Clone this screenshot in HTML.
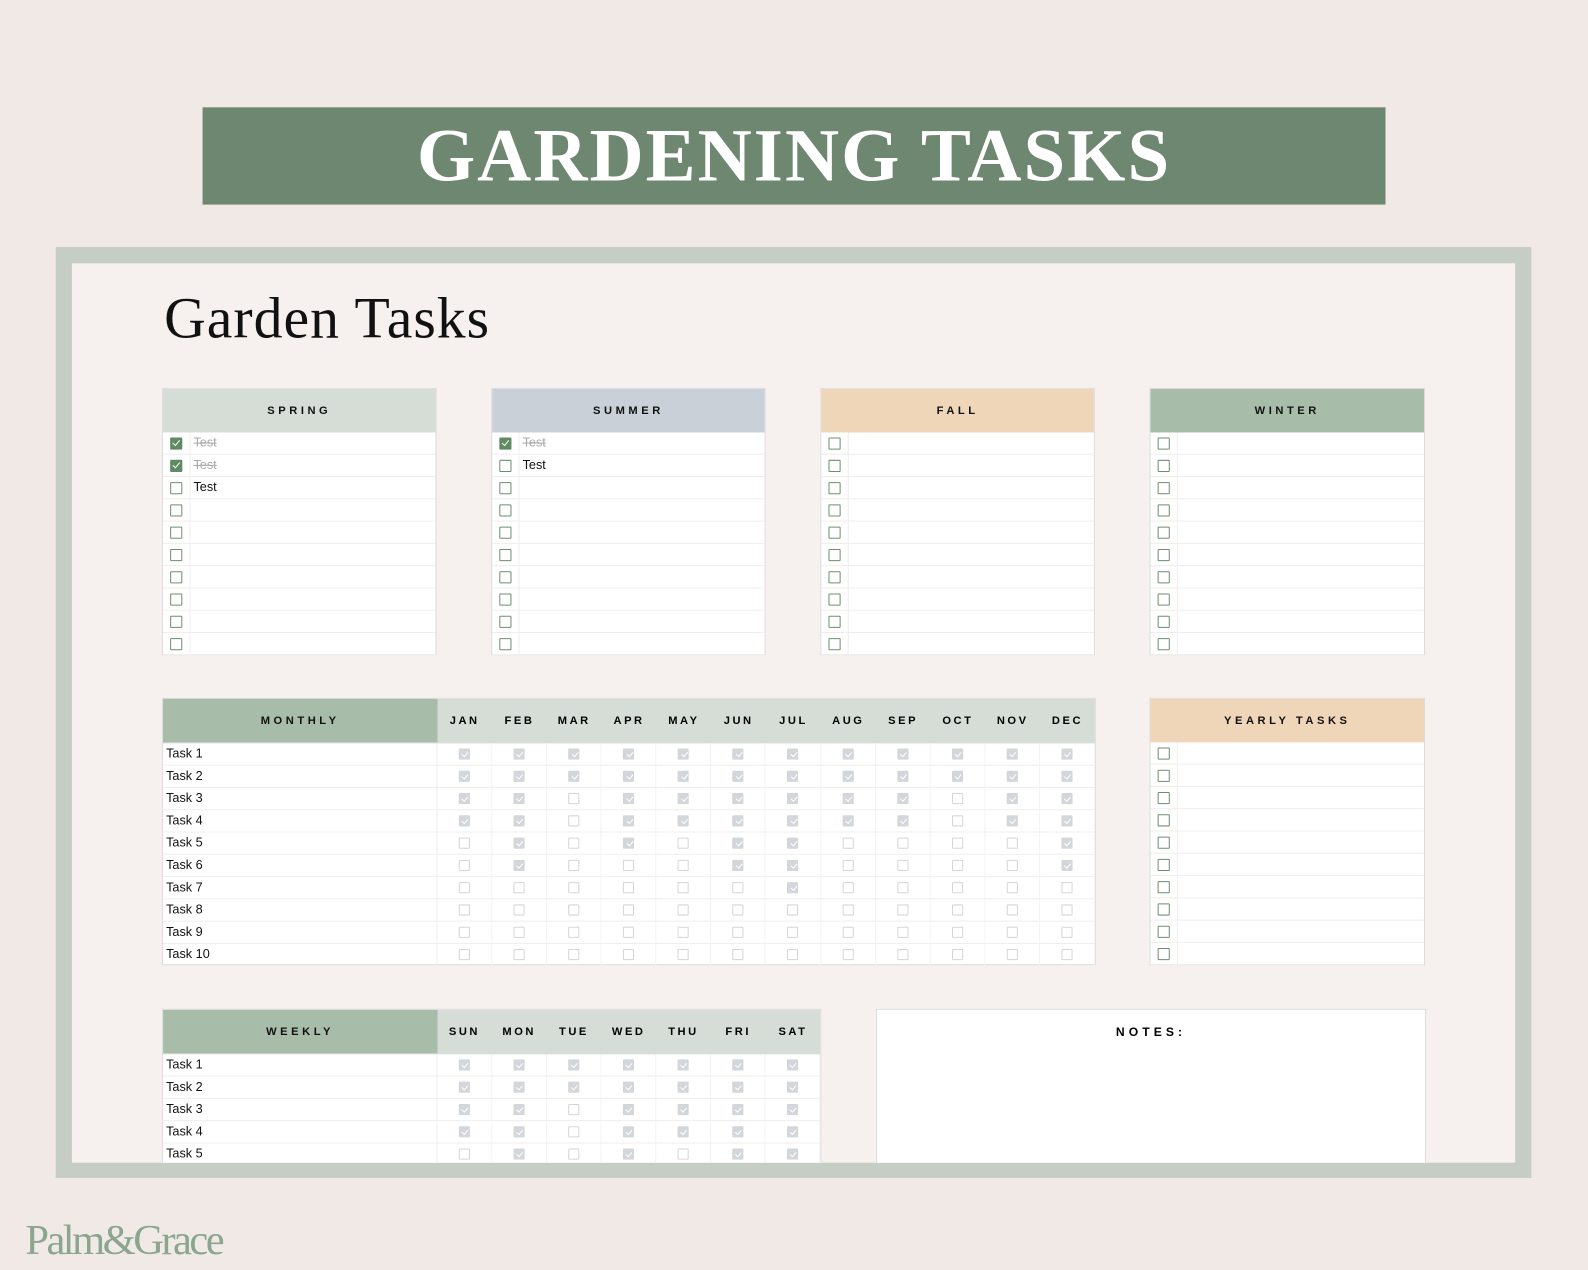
<!DOCTYPE html>
<html><head><meta charset="utf-8">
<style>
html,body{margin:0;padding:0;width:1588px;height:1270px;overflow:hidden;background:#f1e9e6;}
#w{position:absolute;left:0;top:0;width:1568px;height:1254px;transform:scale(1.0128);transform-origin:0 0;font-family:"Liberation Sans",sans-serif;}
.abs{position:absolute;}
#banner{left:200px;top:106px;width:1168px;height:96px;background:#6e8770;color:#fff;font-family:"Liberation Serif",serif;font-size:74px;font-weight:bold;text-align:center;line-height:96px;letter-spacing:2px;}
#frame{left:55px;top:244px;width:1457px;height:919px;background:#c6cdc4;}
#inner{left:71px;top:260px;width:1425px;height:888px;background:#f6f1ee;overflow:hidden;}
#gt{left:162px;top:282px;font-family:"Liberation Serif",serif;font-size:57px;letter-spacing:1px;color:#111;}
.box{position:absolute;background:#fff;border:1px solid #dcdcdc;box-sizing:border-box;}
.hd{height:43px;line-height:44px;text-align:center;font-size:11px;font-weight:bold;letter-spacing:3.5px;color:#111;}
.row{height:22px;border-bottom:1px solid #f0eeec;box-sizing:border-box;display:flex;position:relative;}
.cc{width:27px;border-right:1px solid #eeeeee;box-sizing:border-box;display:flex;align-items:center;justify-content:center;}
.tx{padding-left:3px;font-size:12.5px;line-height:21px;color:#111;}
.tx.s{color:#aaa;text-decoration:line-through;}
.cb{width:10px;height:10px;border:1.5px solid #6d8f70;border-radius:1px;position:relative;}
.cb.g{background:#5f8a63;border-color:#5f8a63;}
.cb.g::after,.gb.c::after{content:"";position:absolute;left:3px;top:0px;width:3px;height:6px;border:solid #fff;border-width:0 1.6px 1.6px 0;transform:rotate(40deg);}
.gb{width:11px;height:11px;border:1px solid #d3d6d9;border-radius:1px;position:relative;box-sizing:border-box;margin:auto;}
.gb.c{background:#d3d6da;}
.gb.c::after{left:3.5px;top:1px;width:2.5px;height:5px;border-width:0 1.4px 1.4px 0;}
.grid{display:flex;}
.lab{width:271px;border-right:1px solid #eee;box-sizing:border-box;font-size:12.5px;line-height:21px;padding-left:3px;color:#111;}
.mc{width:54.17px;display:flex;align-items:center;border-right:1px solid #f3f3f3;box-sizing:border-box;}
.mh{width:54.17px;text-align:center;font-size:11px;font-weight:bold;letter-spacing:2.5px;line-height:44px;}
#logo{left:25px;top:1201px;font-family:"Liberation Serif",serif;font-size:42px;color:#8aa68e;letter-spacing:-2.5px;}
</style></head><body>
<div id="w">
<div id="banner" class="abs">GARDENING TASKS</div>
<div id="frame" class="abs"></div>
<div id="inner" class="abs"></div>
<div id="gt" class="abs">Garden Tasks</div>

<div class="box" style="left:160px;top:383px;width:271px;height:264px"><div class="hd" style="background:#d6ddd6">SPRING</div><div class="rows">
<div class="row"><div class="cc"><div class="cb g"></div></div><div class="tx s">Test</div></div>
<div class="row"><div class="cc"><div class="cb g"></div></div><div class="tx s">Test</div></div>
<div class="row"><div class="cc"><div class="cb"></div></div><div class="tx">Test</div></div>
</div></div>
<div class="box" style="left:485px;top:383px;width:271px;height:264px"><div class="hd" style="background:#c9d0d7">SUMMER</div><div class="rows">
<div class="row"><div class="cc"><div class="cb g"></div></div><div class="tx s">Test</div></div>
<div class="row"><div class="cc"><div class="cb"></div></div><div class="tx">Test</div></div>
</div></div>
<div class="box" style="left:810px;top:383px;width:271px;height:264px"><div class="hd" style="background:#f0d6b9">FALL</div><div class="rows"></div></div>
<div class="box" style="left:1135px;top:383px;width:272px;height:264px"><div class="hd" style="background:#a7bdaa">WINTER</div><div class="rows"></div></div>
<div class="box" style="left:1135px;top:689px;width:272px;height:264px"><div class="hd" style="background:#f0d6b9">YEARLY TASKS</div><div class="rows"></div></div>

<div class="box" style="left:160px;top:689px;width:922px;height:264px">
<div class="grid" style="background:#d6ddd6"><div class="hd" style="width:271px;background:#a7bdaa">MONTHLY</div>
<div class="mh">JAN</div><div class="mh">FEB</div><div class="mh">MAR</div><div class="mh">APR</div><div class="mh">MAY</div><div class="mh">JUN</div><div class="mh">JUL</div><div class="mh">AUG</div><div class="mh">SEP</div><div class="mh">OCT</div><div class="mh">NOV</div><div class="mh">DEC</div></div>
<div id="mrows">
<div class="row"><div class="lab">Task 1</div></div><div class="row"><div class="lab">Task 2</div></div><div class="row"><div class="lab">Task 3</div></div><div class="row"><div class="lab">Task 4</div></div><div class="row"><div class="lab">Task 5</div></div><div class="row"><div class="lab">Task 6</div></div><div class="row"><div class="lab">Task 7</div></div><div class="row"><div class="lab">Task 8</div></div><div class="row"><div class="lab">Task 9</div></div><div class="row"><div class="lab">Task 10</div></div>
</div></div>

<div class="box" style="left:160px;top:996px;width:651px;height:152px;overflow:hidden;border-bottom:none">
<div class="grid" style="background:#d6ddd6"><div class="hd" style="width:271px;background:#a7bdaa">WEEKLY</div>
<div class="mh">SUN</div><div class="mh">MON</div><div class="mh">TUE</div><div class="mh">WED</div><div class="mh">THU</div><div class="mh">FRI</div><div class="mh">SAT</div></div>
<div id="wrows">
<div class="row"><div class="lab">Task 1</div></div><div class="row"><div class="lab">Task 2</div></div><div class="row"><div class="lab">Task 3</div></div><div class="row"><div class="lab">Task 4</div></div><div class="row"><div class="lab">Task 5</div></div>
</div></div>

<div class="box" style="left:865px;top:996px;width:543px;height:152px;border-bottom:none"><div style="text-align:center;font-size:12px;font-weight:bold;letter-spacing:4px;margin-top:15px">NOTES:</div></div>

<div id="logo" class="abs">Palm&amp;Grace</div>
</div>
<script>
document.querySelectorAll('.box .rows').forEach(function(r){
  while(r.children.length<10){var d=document.createElement('div');d.className='row';d.innerHTML='<div class="cc"><div class="cb"></div></div><div class="tx"></div>';r.appendChild(d);}
});
var M=["111111111111","111111111111","110111111011","110111111011","010101100001","010001100001","000000100000","000000000000","000000000000","000000000000"];
var W=["1111111","1111111","1101111","1101111","0101011"];
function fill(id,P){var rows=document.getElementById(id).children;for(var i=0;i<rows.length;i++){for(var j=0;j<P[i].length;j++){var c=document.createElement('div');c.className='mc';c.innerHTML='<div class="gb'+(P[i][j]=='1'?' c':'')+'"></div>';rows[i].appendChild(c);}}}
fill('mrows',M);fill('wrows',W);
</script>
</body></html>
